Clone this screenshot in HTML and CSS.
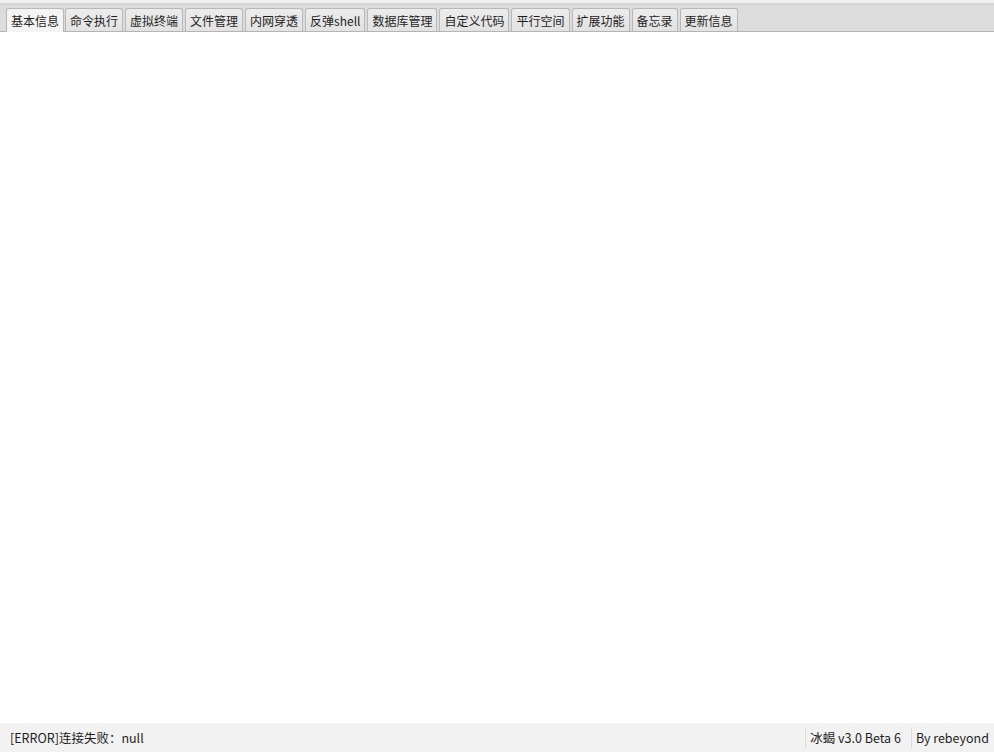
FILE: index.html
```html
<!DOCTYPE html>
<html lang="zh-CN">

<head>
  <meta charset="UTF-8" />
  <title>冰蝎 v3.0 Beta 6</title>
  <link rel="stylesheet" href="styles.css">
</head>

<body>
  <!-- 탭 영역 -->
  <div class="tabbar">
    <ul class="tabs">
      <li class="on">基本信息</li>
      <li>命令执行</li>
      <li>虚拟终端</li>
      <li>文件管理</li>
      <li>内网穿透</li>
      <li>反弹shell</li>
      <li>数据库管理</li>
      <li>自定义代码</li>
      <li>平行空间</li>
      <li>扩展功能</li>
      <li>备忘录</li>
      <li>更新信息</li>
    </ul>
  </div>

  <!-- 본문 -->
  <div class="cont"></div>

  <!-- 상태바 -->
  <div class="status">
    <span class="msg">[ERROR]连接失败：null</span>
    <span class="ver">冰蝎 v3.0 Beta 6</span>
    <span class="author">By rebeyond</span>
  </div>
</body>

</html>
```
FILE: styles.css
```css
/* 초기화 */
html,
body,
ul {
  margin: 0;
  padding: 0;
}

ul {
  list-style: none;
}

body {
  display: flex;
  flex-direction: column;
  height: 752px;
  font-family: "Noto Sans CJK SC", "Noto Sans", sans-serif;
  color: #1e1e1e;
  background-color: #fff;
  overflow: hidden;
}

/* 탭바 */
.tabbar {
  padding-top: 3px;
  background-color: #f0f0f0;
}

.tabs {
  display: flex;
  height: 23px;
  padding: 5px 0 0 6px;
  background: linear-gradient(#d4d4d4, #dcdcdc 4px);
  border-bottom: 1px solid #b4b4b4;
}

.tabs li {
  height: 22px;
  margin-right: 2px;
  padding: 0 4px;
  border: 1px solid #b8b8b8;
  border-bottom: 0;
  border-radius: 3px 3px 0 0;
  background: linear-gradient(#ececec, #e2e2e2);
  font-size: 12px;
  line-height: 23px;
  white-space: nowrap;
}

/* 선택된 탭 */
.tabs li.on {
  height: 23px;
  margin-right: 1px;
  background: #f4f4f4;
}

/* 본문 */
.cont {
  flex: 1;
}

/* 상태바 */
.status {
  display: flex;
  align-items: center;
  height: 29px;
  background-color: #f2f2f2;
  font-size: 12.5px;
}

.status .msg {
  flex: 1;
  padding-left: 10px;
}

.status .ver,
.status .author {
  height: 20px;
  line-height: 20px;
  border-left: 1px solid #dadada;
  padding: 0 10px 0 4px;
}

.status .author {
  padding-right: 5px;
}
```
